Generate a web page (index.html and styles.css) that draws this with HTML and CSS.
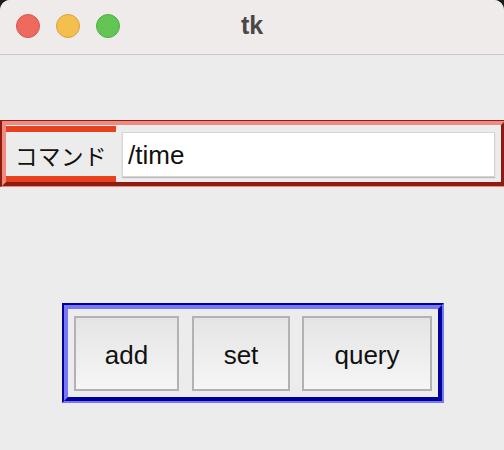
FILE: index.html
```html
<!DOCTYPE html>
<html lang="ja">
<head>
    <meta charset="UTF-8">
    <title>tk</title>
    <link rel="stylesheet" href="styles.css">
</head>
<body>
    <div class="window">
        <div class="titlebar">
            <div class="lights">
                <span class="light close"></span>
                <span class="light minimize"></span>
                <span class="light zoom"></span>
            </div>
            <div class="title">tk</div>
        </div>

        <div class="content">
            <div class="red-frame">
                <div class="red-inner">
                    <div class="cmd-label">コマンド</div>
                    <div class="entry">/time</div>
                </div>
            </div>

            <div class="blue-frame">
                <div class="blue-inner">
                    <button class="btn btn-add">add</button>
                    <button class="btn btn-set">set</button>
                    <button class="btn btn-query">query</button>
                </div>
            </div>
        </div>
    </div>
</body>
</html>
```

FILE: styles.css
```css
html, body {
    margin: 0;
    padding: 0;
    background: #1c1c1c;
    overflow: hidden;
}
.window {
    width: 504px;
    height: 450px;
    background: #ececec;
    border-radius: 10px 10px 0 0;
    overflow: hidden;
    font-family: "Liberation Sans", Arial, sans-serif;
}
.titlebar {
    position: relative;
    height: 54px;
    background: #efebeb;
    border-bottom: 1px solid #c9c7c7;
}
.lights {
    display: flex;
    gap: 16px;
    padding: 14px 0 0 16px;
}
.light {
    width: 22px;
    height: 22px;
    border-radius: 50%;
    border: 1px solid transparent;
}
.close { background: #ee6a5f; border-color: #d8574c; }
.minimize { background: #f5bf4f; border-color: #d9a23a; }
.zoom { background: #62c554; border-color: #4fae42; }
.title {
    position: absolute;
    top: 11px;
    left: 0;
    right: 0;
    text-align: center;
    font-weight: bold;
    font-size: 25px;
    color: #4b4848;
}
.content {
    display: flex;
    flex-direction: column;
}
.red-frame {
    margin-top: 65px;
    width: 503px;
    border-style: solid;
    border-width: 1px 1px 1px 2px;
    border-color: #8c1c10 #f08b82 #f08b82 #8c1c10;
}
.red-inner {
    display: flex;
    align-items: center;
    border-style: solid;
    border-width: 4px 4px 4px 4px;
    border-color: #f08b82 #8c1c10 #8c1c10 #f08b82;
    padding-top: 1px;
}
.cmd-label {
    width: 110px;
    height: 44px;
    line-height: 46px;
    border-top: 6px solid #e9401f;
    border-bottom: 6px solid #e9401f;
    text-align: center;
    letter-spacing: 0.5px;
    font-family: "Noto Sans CJK JP", sans-serif;
    font-size: 22.5px;
    color: #111;
}
.entry {
    flex: 1;
    height: 43px;
    line-height: 45px;
    margin: 0 6px;
    padding-left: 5px;
    background: #fff;
    border: 1px solid #d6d6d6;
    box-shadow: 0 1px 1px #bdbdbd;
    font-size: 26px;
    color: #111;
}
.blue-frame {
    margin: 116px 0 0 62px;
    align-self: flex-start;
    border-style: solid;
    border-width: 2px;
    border-color: #00009c #7878f2 #7878f2 #00009c;
}
.blue-inner {
    display: flex;
    border-style: solid;
    border-width: 4px;
    border-color: #7878f2 #00009c #00009c #7878f2;
    padding: 7px 6px 6px 6px;
}
.btn {
    height: 75px;
    margin: 0;
    padding: 4px 0 0;
    border: 2px solid #b2b2b2;
    background: linear-gradient(#e4e4e4, #f6f6f6);
    font-family: "Liberation Sans", Arial, sans-serif;
    font-size: 26px;
    color: #111;
}
.btn-add { width: 105px; }
.btn-set { width: 98px; margin-left: 13px; }
.btn-query { width: 130px; margin-left: 12px; }
```
